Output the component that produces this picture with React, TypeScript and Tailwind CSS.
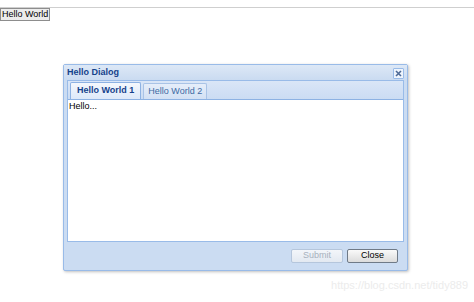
export default function App() {
  return (
    <div className="relative w-[474px] h-[302px] overflow-hidden bg-white font-['Liberation_Sans',Arial,sans-serif] text-black">
      {/* page content */}
      <div className="h-[8px] border-b border-[#cfcfcf]" />
      <div className="flex">
        <button className="h-[13px] border border-[#8d8d8d] bg-[#ececec] px-[1px] text-[9px] leading-[11px] text-black">
          Hello World
        </button>
      </div>

      {/* window */}
      <div className="absolute left-[63px] top-[64px] w-[345px] h-[207px] flex flex-col rounded-[2px] border border-[#99bbe8] bg-[#cbdcf2] shadow-[1px_1px_3px_rgba(0,0,0,0.25)]">
        {/* header */}
        <div className="h-[15px] flex items-center justify-between pl-[3px] pr-[3px] bg-gradient-to-b from-[#dde8f6] to-[#cadbf1]">
          <span className="text-[9px] font-bold leading-none text-[#15428b]">Hello Dialog</span>
          <span className="flex items-center justify-center w-[11px] h-[11px] mt-[2px] border border-[#99bbe8] bg-[#eef4fc] rounded-[1px]">
            <svg width="7" height="7" viewBox="0 0 7 7">
              <path d="M1 1L6 6M6 1L1 6" stroke="#4e6a96" strokeWidth="1.6" />
            </svg>
          </span>
        </div>

        {/* tab panel */}
        <div className="flex-1 flex flex-col px-[3px]">
          <div className="flex-1 flex flex-col border border-[#99bbe8]">
            <div className="h-[19px] flex items-end gap-[2px] pl-[2px] border-b border-[#8db2e3] bg-gradient-to-b from-[#dae6f7] to-[#cbdcf3]">
              <div className="h-[17px] flex items-center px-[6px] rounded-t-[2px] border border-b-0 border-[#8db2e3] bg-gradient-to-b from-[#f4f8fd] to-[#dde9f9] text-[9px] font-bold text-[#15428b]">
                Hello World 1
              </div>
              <div className="h-[16px] flex items-center px-[4px] rounded-t-[2px] border border-b-0 border-[#a9c3e6] bg-gradient-to-b from-[#e6eefa] to-[#d3e1f4] text-[9px] text-[#416aa3]">
                Hello World 2
              </div>
            </div>
            <div className="flex-1 bg-white px-[1px] pt-[1px] text-[9px] leading-[10px]">Hello...</div>
          </div>
        </div>

        {/* footer */}
        <div className="h-[28px] flex items-center justify-end gap-[4px] pr-[9px] pb-[1px]">
          <button className="w-[52px] h-[14px] rounded-[2px] border border-[#b5c6dc] bg-gradient-to-b from-[#f3f6fa] to-[#e3e9f1] text-[9px] leading-none text-[#a7b1bd]">
            Submit
          </button>
          <button className="w-[51px] h-[14px] rounded-[2px] border border-[#6f7a87] bg-gradient-to-b from-[#fafafa] to-[#dcdcdc] text-[9px] leading-none text-black">
            Close
          </button>
        </div>
      </div>

      {/* watermark */}
      <div className="absolute right-[6px] top-[277px] text-[11px] text-[#ececec]">https://blog.csdn.net/tidy889</div>
    </div>
  );
}
